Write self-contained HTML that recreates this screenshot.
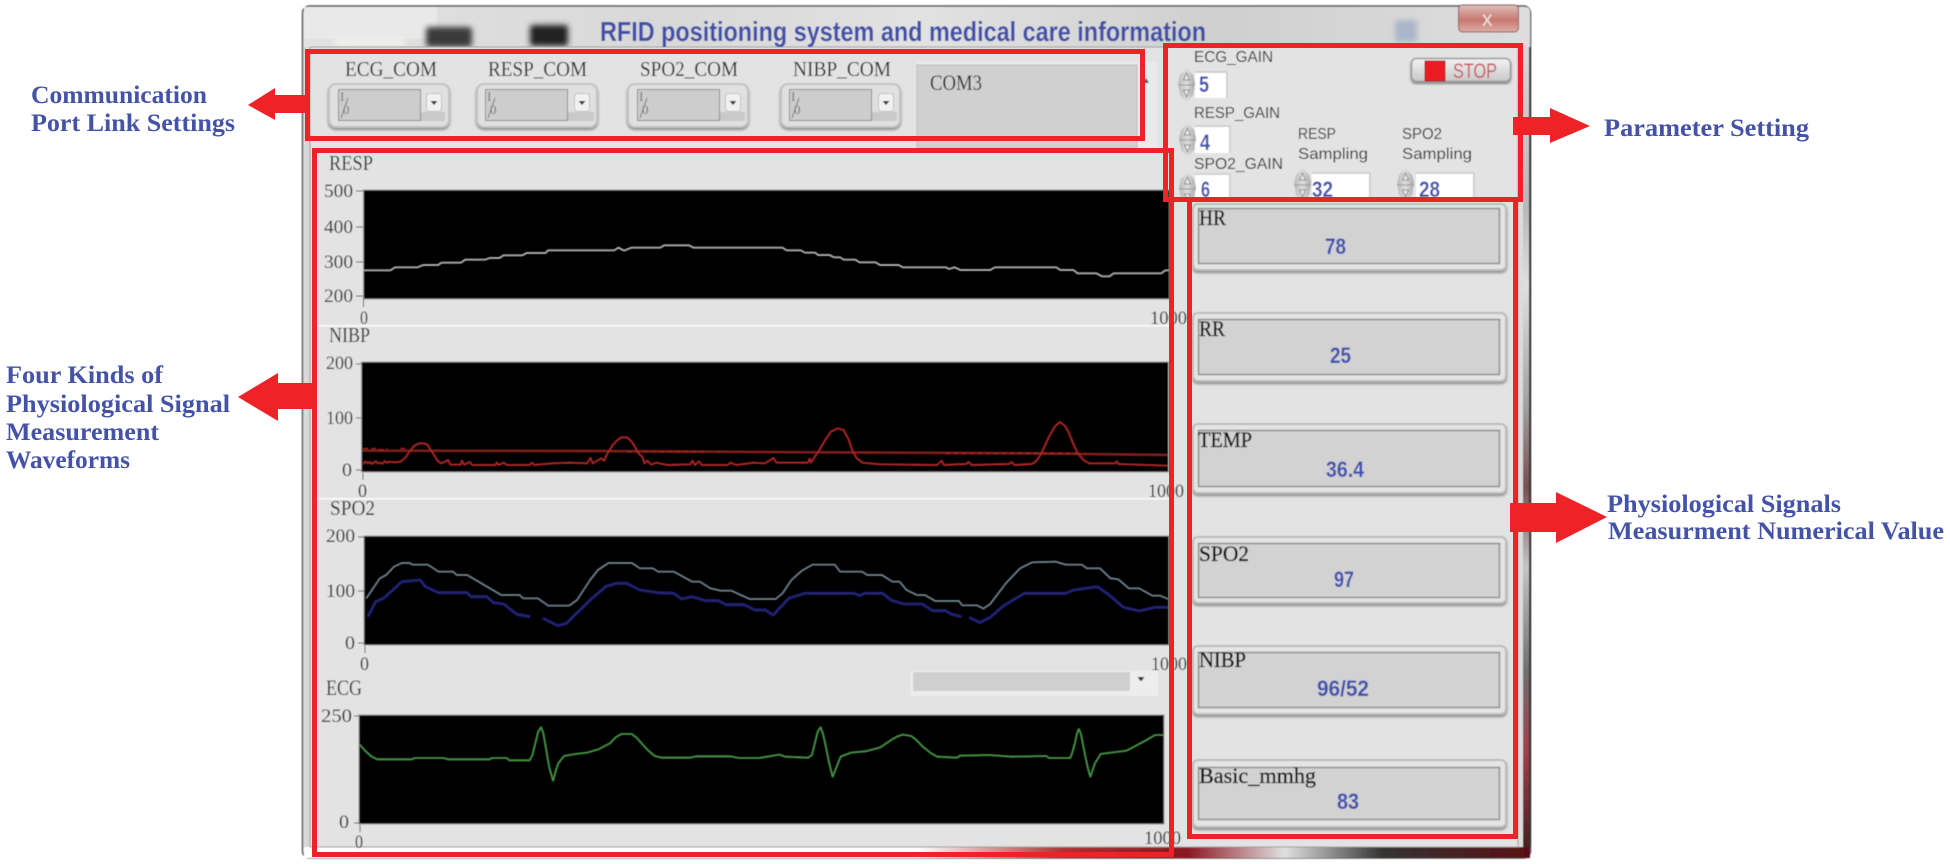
<!DOCTYPE html>
<html><head><meta charset="utf-8"><title>RFID positioning system</title>
<style>html,body{margin:0;padding:0;background:#fff;width:1950px;height:864px;overflow:hidden}svg{display:block}
.s{font-family:"Liberation Serif",serif;fill:#2b2b2b}
.a{font-family:"Liberation Sans",sans-serif;fill:#333}
.n{font-family:"Liberation Sans",sans-serif;font-weight:bold;fill:#4351ae}
.l{font-family:"Liberation Serif",serif;font-weight:bold;fill:#4453a8;font-size:25px}
.k{font-family:"Liberation Serif",serif;fill:#111;stroke:#111;stroke-width:.35}
polyline,path.c{fill:none;vector-effect:non-scaling-stroke;stroke-linejoin:round}
</style></head><body>
<svg xmlns="http://www.w3.org/2000/svg" width="1950" height="864" viewBox="0 0 1950 864">
<defs>
<linearGradient id="tb" x1="0" y1="0" x2="1" y2="0"><stop offset="0" stop-color="#e2e2e2"/><stop offset=".3" stop-color="#d8d8d8"/><stop offset=".5" stop-color="#e2e2e2"/><stop offset=".75" stop-color="#cfcfcf"/><stop offset="1" stop-color="#dedede"/></linearGradient>
<linearGradient id="cl" x1="0" y1="0" x2="0" y2="1"><stop offset="0" stop-color="#dcc0ba"/><stop offset=".55" stop-color="#c9786f"/><stop offset="1" stop-color="#dcaea6"/></linearGradient>
<linearGradient id="rf" x1="0" y1="0" x2="0" y2="1"><stop offset="0" stop-color="#d8d8d8"/><stop offset=".2" stop-color="#b8b8b8"/><stop offset=".3" stop-color="#e0e0e0"/><stop offset=".45" stop-color="#a0a0a0"/><stop offset=".55" stop-color="#7a5050"/><stop offset=".65" stop-color="#c4c4c4"/><stop offset=".78" stop-color="#707070"/><stop offset=".88" stop-color="#a04048"/><stop offset="1" stop-color="#4a2020"/></linearGradient>
<linearGradient id="bf" x1="0" y1="0" x2="1" y2="0"><stop offset="0" stop-color="#fff"/><stop offset=".5" stop-color="#fff"/><stop offset=".62" stop-color="#b03030"/><stop offset=".72" stop-color="#8a1520"/><stop offset=".8" stop-color="#e0e0e0"/><stop offset=".88" stop-color="#333"/><stop offset="1" stop-color="#5a1015"/></linearGradient>
<linearGradient id="bt" x1="0" y1="0" x2="0" y2="1"><stop offset="0" stop-color="#f2f2f2"/><stop offset="1" stop-color="#c8c8c8"/></linearGradient>
<linearGradient id="sp" x1="0" y1="0" x2="1" y2="0"><stop offset="0" stop-color="#b8b8b8"/><stop offset=".5" stop-color="#dedede"/><stop offset="1" stop-color="#a8a8a8"/></linearGradient>
<filter id="b6" x="-30%" y="-30%" width="160%" height="160%"><feGaussianBlur stdDeviation="3"/></filter>
<filter id="b1" x="-5%" y="-5%" width="110%" height="110%"><feGaussianBlur stdDeviation=".45"/></filter>
<filter id="sh" x="-5%" y="-10%" width="110%" height="125%"><feDropShadow dx="0" dy="2" stdDeviation="1.200" flood-color="#8a8a8a"/></filter>
<clipPath id="p3"><rect x="1163" y="43" width="360" height="157"/></clipPath>
<g id="dd"><rect x=".5" y=".5" width="15" height="18" rx="3" fill="#f1f1f1" stroke="#c4c4c4"/><path d="M4.500 8h7l-3.500 4z" fill="#333"/></g>
<g id="spin"><path d="M8.500 0L15 7 17 15 15 27 8.500 34 2 27 0 15 2 7z" fill="url(#sp)"/><path d="M0 17H17" stroke="#999"/><path d="M8.500 5l3 7h-6zM5.500 22h6l-3 7z" fill="#e8e8e8" stroke="#777" stroke-width=".8"/></g>
</defs>

<!-- window frame -->
<g filter="url(#b1)">
<rect x="302.500" y="6" width="1228" height="852" rx="7" fill="#e3e3e3" stroke="#555" stroke-width="1.500"/>
<path d="M304 12q0-5 5-5H1525q5 0 5 5V47H304z" fill="url(#tb)"/>
<rect x="304" y="7" width="133" height="32" fill="#e9e9e9"/>
<rect x="426" y="27" width="46" height="20" rx="3" fill="#3a3a3a" filter="url(#b6)"/>
<rect x="530" y="25" width="38" height="21" rx="3" fill="#222" filter="url(#b6)"/>
<rect x="1395" y="20" width="22" height="22" fill="#a9b5c8" filter="url(#b6)"/>
<rect x="335" y="39" width="70" height="7" fill="#f3f3ee" filter="url(#b6)"/>
<rect x="1518" y="47" width="12.500" height="800" fill="url(#rf)"/>
<rect x="1518" y="47" width="5" height="800" fill="#dcdcdc"/>
<rect x="1529" y="47" width="2" height="800" fill="#333"/>
<rect x="304" y="847" width="1226" height="11" fill="url(#bf)"/>
<rect x="304" y="47" width="8" height="800" fill="#d8d8d8"/>
<rect x="310" y="47" width="1208" height="800" fill="#e3e3e3" stroke="#9a9a9a" stroke-width="1"/>

<text class="a" x="600" y="41" font-size="28" font-weight="bold" style="fill:#3f4fa8" textLength="606" lengthAdjust="spacingAndGlyphs">RFID positioning system and medical care information</text>

<rect x="1458.500" y="5" width="60" height="27" rx="4" fill="url(#cl)" stroke="#8a5a54"/>
<text class="a" x="1482" y="26" font-size="21" style="fill:#efe0dc">x</text>

<!-- COM section -->
<g fill="#e0e0e0" stroke="#c2c2c2" stroke-width="2" filter="url(#sh)">
<rect x="329" y="84" width="120" height="43" rx="7"/>
<rect x="477" y="84" width="120" height="43" rx="7"/>
<rect x="628" y="84" width="120" height="43" rx="7"/>
<rect x="781" y="84" width="119" height="43" rx="7"/>
</g>
<g fill="#c9c9c9"><rect x="421" y="112" width="24" height="9"/><rect x="568" y="112" width="26" height="9"/><rect x="719" y="112" width="26" height="9"/><rect x="871" y="112" width="26" height="9"/></g>
<g fill="#cdcdcd" stroke="#8a8a8a">
<rect x="338.500" y="89.500" width="82" height="31"/>
<rect x="485.500" y="89.500" width="82" height="31"/>
<rect x="637.500" y="89.500" width="82" height="31"/>
<rect x="789.500" y="89.500" width="82" height="31"/>
</g>
<use href="#dd" transform="translate(426,93)"/>
<use href="#dd" transform="translate(574,93)"/>
<use href="#dd" transform="translate(725,93)"/>
<use href="#dd" transform="translate(878,93)"/>
<g class="s" font-size="21">
<text x="345" y="76" textLength="92" lengthAdjust="spacingAndGlyphs">ECG_COM</text>
<text x="488" y="76" textLength="99" lengthAdjust="spacingAndGlyphs">RESP_COM</text>
<text x="640" y="76" textLength="98" lengthAdjust="spacingAndGlyphs">SPO2_COM</text>
<text x="793" y="76" textLength="98" lengthAdjust="spacingAndGlyphs">NIBP_COM</text>
</g>
<g class="s" font-size="13" style="fill:#777">
<text x="340" y="101">I</text><text x="343" y="114">0</text><path d="M348 98l-7 20" stroke="#777" fill="none"/>
<text x="487" y="101">I</text><text x="490" y="114">0</text><path d="M495 98l-7 20" stroke="#777" fill="none"/>
<text x="639" y="101">I</text><text x="642" y="114">0</text><path d="M647 98l-7 20" stroke="#777" fill="none"/>
<text x="791" y="101">I</text><text x="794" y="114">0</text><path d="M799 98l-7 20" stroke="#777" fill="none"/>
</g>
<rect x="917" y="62" width="240" height="86" fill="#eaeaea"/>
<rect x="917" y="65" width="220" height="83" fill="#d0d0d0" stroke="#bcbcbc"/>
<text class="s" x="930" y="90" font-size="22" textLength="52" lengthAdjust="spacingAndGlyphs">COM3</text>
<path d="M1146 78l3 5h-6z" fill="#555"/>

<!-- plots -->
<rect x="317" y="325" width="852" height="1.500" fill="#fbfbfb"/>
<rect x="317" y="498" width="852" height="1.500" fill="#fbfbfb"/>
<rect x="363.500" y="190" width="806" height="109" fill="#000" stroke="#8a8a8a"/>
<rect x="361.500" y="362" width="807" height="110" fill="#000" stroke="#8a8a8a"/>
<rect x="364" y="536" width="805" height="109" fill="#000" stroke="#8a8a8a"/>
<rect x="359" y="715" width="805" height="109" fill="#000" stroke="#8a8a8a"/>

<g class="s" font-size="19">
<text x="329" y="170" font-size="21" textLength="44" lengthAdjust="spacingAndGlyphs">RESP</text>
<text x="324" y="197" textLength="29" lengthAdjust="spacingAndGlyphs">500</text>
<text x="324" y="233" textLength="29" lengthAdjust="spacingAndGlyphs">400</text>
<text x="324" y="268" textLength="29" lengthAdjust="spacingAndGlyphs">300</text>
<text x="324" y="302" textLength="29" lengthAdjust="spacingAndGlyphs">200</text>
<text x="360" y="324" textLength="8" lengthAdjust="spacingAndGlyphs">0</text>
<text x="1150" y="324" textLength="37" lengthAdjust="spacingAndGlyphs">1000</text>
<text x="329" y="342" font-size="21" textLength="41" lengthAdjust="spacingAndGlyphs">NIBP</text>
<text x="326" y="369" textLength="27" lengthAdjust="spacingAndGlyphs">200</text>
<text x="326" y="424" textLength="27" lengthAdjust="spacingAndGlyphs">100</text>
<text x="342" y="476" textLength="10" lengthAdjust="spacingAndGlyphs">0</text>
<text x="358" y="497" textLength="9" lengthAdjust="spacingAndGlyphs">0</text>
<text x="1148" y="497" textLength="36" lengthAdjust="spacingAndGlyphs">1000</text>
<text x="330" y="515" font-size="21" textLength="45" lengthAdjust="spacingAndGlyphs">SPO2</text>
<text x="326" y="542" textLength="29" lengthAdjust="spacingAndGlyphs">200</text>
<text x="326" y="597" textLength="29" lengthAdjust="spacingAndGlyphs">100</text>
<text x="345" y="649" textLength="10" lengthAdjust="spacingAndGlyphs">0</text>
<text x="360" y="670" textLength="9" lengthAdjust="spacingAndGlyphs">0</text>
<text x="1151" y="670" textLength="36" lengthAdjust="spacingAndGlyphs">1000</text>
<text x="326" y="695" font-size="22" textLength="36" lengthAdjust="spacingAndGlyphs">ECG</text>
<text x="321" y="722" textLength="31" lengthAdjust="spacingAndGlyphs">250</text>
<text x="339" y="828" textLength="10" lengthAdjust="spacingAndGlyphs">0</text>
<text x="355" y="848" textLength="8" lengthAdjust="spacingAndGlyphs">0</text>
<text x="1144" y="844" textLength="37" lengthAdjust="spacingAndGlyphs">1000</text>
</g>
<path d="M356 191h7M356 227h7M356 262h7M356 296h7M356 364h5M356 418h5M356 470h5M358 537h6M358 591h6M358 643h6M354 716h5M354 823h5M363.500 299v8M363 473v7M365 646v7M360 825v7" stroke="#555" fill="none"/>

<rect x="911" y="671" width="247" height="25" fill="#ededed"/>
<rect x="913" y="672" width="217" height="19" fill="#cfcfcf"/>
<path d="M1137.500 677h7l-3.500 4.500z" fill="#333"/>

<!-- curves: RESP -->
<g transform="translate(290,0) scale(.57398,.33333)">
<polyline stroke="#c4c4c4" stroke-width="1.100" points="128,811 175,811 183,802 222,802 232,795 258,795 264,788 298,788 305,779 340,779 348,774 365,774 372,766 405,766 412,759 445,759 450,751 565,751 572,743 582,752 595,743 645,743 652,736 695,736 703,743 858,743 865,751 890,751 897,758 915,758 920,765 940,765 948,772 958,772 965,779 985,779 992,787 1020,787 1028,795 1060,795 1068,802 1143,802 1148,807 1158,802 1168,810 1220,810 1228,802 1335,802 1342,810 1365,810 1372,820 1405,820 1415,829 1428,829 1435,820 1518,820 1525,811 1535,811"/>
</g>
<!-- NIBP -->
<g transform="translate(300,300) scale(.57398,.33333)">
<polyline stroke="#84201f" stroke-width="2" points="108,452 500,453 800,456 1280,460 1512,465"/>
<polyline stroke="#b02a2c" stroke-width="1.400" points="110,492 114,484 118,490 122,486 125,492 132,484 136,490 140,488 144,491 148,483 152,489 155,485 165,487 175,485 180,478 185,470 190,456 195,445 200,436 208,430 216,430 222,434 227,448 232,460 238,478 245,490 252,486 258,480 262,494 270,494 280,494 282,482 286,494 296,486 300,495 340,495 343,488 346,495 355,488 360,495 400,495 404,488 408,495 440,490 470,488 500,490 506,474 510,490 525,475 530,482 535,462 545,435 552,422 560,412 570,412 578,425 585,445 590,460 597,472 600,490 605,482 612,494 620,488 640,495 680,493 684,482 688,495 695,484 700,495 745,495 750,488 760,495 790,488 810,490 825,474 830,488 885,488 888,476 890,488 897,470 905,450 915,420 925,395 937,385 947,390 955,415 962,450 970,475 980,488 1010,493 1110,495 1118,482 1122,495 1160,492 1165,486 1170,495 1235,492 1240,486 1245,495 1275,492 1283,483 1290,465 1297,440 1305,410 1315,380 1324,366 1333,378 1340,400 1348,435 1355,460 1365,480 1375,490 1420,490 1423,484 1426,492 1440,493 1512,497"/>
<path class="c" stroke="#b02a2c" stroke-width="1.200" stroke-dasharray="5 3" d="M110 446h25l6 4h8l3-4M175 446h10M570 455h135M730 455h2M1125 460h235"/>
</g>
<!-- SPO2 -->
<g transform="translate(360,530) scale(.52296,.33333)">
<polyline stroke="#7a8e9b" stroke-width="1.100" points="12,205 25,175 38,145 50,135 65,110 80,99 95,99 100,104 130,104 150,125 178,125 185,135 205,135 270,195 305,195 312,205 340,205 360,227 400,227 415,210 440,150 455,120 475,99 520,99 535,115 560,115 570,125 600,125 635,155 650,155 670,175 690,182 710,182 745,207 795,207 808,190 825,150 845,122 865,104 908,104 918,125 960,125 970,135 998,135 1018,155 1032,155 1045,180 1065,195 1080,195 1100,213 1145,213 1152,226 1180,226 1192,236 1205,222 1235,160 1262,115 1285,97 1330,95 1350,104 1380,104 1390,115 1415,115 1435,145 1450,148 1470,175 1490,175 1515,197 1530,197 1545,207"/>
<path class="c" stroke="#23236f" stroke-width="2.600" d="M15 260L30 215 45 205 80 155 115 150 125 170 150 188 205 188 212 200 243 200 255 218 275 222 300 253 325 260M350 265L378 287 395 280 440 210 470 170 490 160 510 160 535 180 570 188 600 190 615 207 635 200 660 212 685 212 700 224 735 224 755 240 775 240 790 255 820 205 850 190 945 190 955 197 965 190 1000 190 1015 210 1040 222 1075 222 1095 242 1120 242 1130 252 1150 260M1165 262L1185 278 1205 262 1230 228 1270 190 1350 190 1365 180 1410 170 1430 192 1460 232 1490 243 1520 232 1545 232"/>
</g>
<!-- ECG -->
<g transform="translate(300,580) scale(.57398,.33333)">
<polyline stroke="#4c9a4c" stroke-width="1.300" points="103,492 115,515 125,530 135,538 195,538 200,534 250,534 258,538 330,538 335,534 360,534 365,541 400,541 405,525 410,490 415,455 420,442 424,460 428,500 434,560 441,602 446,570 450,550 460,528 480,522 500,518 520,508 540,490 550,472 560,462 578,462 587,474 595,490 607,512 618,528 630,533 680,533 690,529 750,529 765,534 800,534 835,524 845,530 885,533 892,525 897,490 902,455 907,442 911,460 915,490 922,550 928,590 935,560 942,530 960,518 985,514 1010,503 1030,480 1040,470 1050,464 1065,468 1075,482 1085,500 1098,518 1110,530 1145,533 1150,527 1200,525 1240,530 1300,528 1305,534 1342,534 1346,515 1350,490 1354,458 1357,447 1361,465 1366,510 1372,560 1377,590 1385,550 1395,522 1440,512 1475,480 1490,465 1505,465"/>
</g>

<!-- parameter panel -->
<g clip-path="url(#p3)">
<g fill="#fff">
<rect x="1195" y="72" width="32" height="26"/>
<rect x="1195" y="126" width="35" height="27"/>
<rect x="1195" y="174" width="35" height="30"/>
<rect x="1312" y="173" width="58" height="30"/>
<rect x="1416" y="173" width="58" height="30"/>
</g>
<path d="M1195 72h32M1195 126h35M1195 174h35M1312 173h58M1416 173h58M1227 72v26M1230 126v27M1230 174v30M1370 173v30M1474 173v30" stroke="#d0d0d0" stroke-width="2" fill="none"/>
<use href="#spin" transform="translate(1178,68)"/>
<use href="#spin" transform="translate(1179,123)"/>
<use href="#spin" transform="translate(1179,172)"/>
<use href="#spin" transform="translate(1294,168)"/>
<use href="#spin" transform="translate(1397,168)"/>
<g class="n" font-size="22">
<text x="1199" y="92" textLength="10" lengthAdjust="spacingAndGlyphs">5</text>
<text x="1200" y="150" textLength="10" lengthAdjust="spacingAndGlyphs">4</text>
<text x="1201" y="197" textLength="9" lengthAdjust="spacingAndGlyphs">6</text>
<text x="1312" y="197" textLength="21" lengthAdjust="spacingAndGlyphs">32</text>
<text x="1419" y="197" textLength="21" lengthAdjust="spacingAndGlyphs">28</text>
</g>
</g>
<g class="a" font-size="16">
<text x="1194" y="62" textLength="79" lengthAdjust="spacingAndGlyphs">ECG_GAIN</text>
<text x="1194" y="118" textLength="86" lengthAdjust="spacingAndGlyphs">RESP_GAIN</text>
<text x="1194" y="169" textLength="89" lengthAdjust="spacingAndGlyphs">SPO2_GAIN</text>
<text x="1298" y="139" textLength="38" lengthAdjust="spacingAndGlyphs">RESP</text>
<text x="1298" y="159" textLength="70" lengthAdjust="spacingAndGlyphs">Sampling</text>
<text x="1402" y="139" textLength="40" lengthAdjust="spacingAndGlyphs">SPO2</text>
<text x="1402" y="159" textLength="70" lengthAdjust="spacingAndGlyphs">Sampling</text>
</g>
<rect x="1411.500" y="58.500" width="99" height="23" rx="5" fill="url(#bt)" stroke="#9a9a9a" stroke-width="1.500" filter="url(#sh)"/>
<rect x="1425" y="61" width="20" height="20" fill="#ea1c24" stroke="#a01820"/>
<text class="a" x="1453" y="78" font-size="21" style="fill:#c9555a" textLength="44" lengthAdjust="spacingAndGlyphs">STOP</text>

<!-- value boxes -->
<g fill="#e4e4e4" stroke="#bcbcbc" stroke-width="2" filter="url(#sh)">
<rect x="1193" y="204" width="313" height="66" rx="5"/>
<rect x="1193" y="313" width="313" height="68" rx="5"/>
<rect x="1193" y="424" width="313" height="69" rx="5"/>
<rect x="1193" y="537" width="313" height="66" rx="5"/>
<rect x="1193" y="646" width="313" height="68" rx="5"/>
<rect x="1193" y="760" width="313" height="67" rx="5"/>
</g>
<g fill="#d2d2d2" stroke="#8f8f8f" stroke-width="1.500">
<rect x="1198.500" y="208.500" width="301" height="55"/>
<rect x="1198.500" y="319.500" width="301" height="55"/>
<rect x="1198.500" y="430.500" width="301" height="56"/>
<rect x="1198.500" y="543.500" width="301" height="54"/>
<rect x="1198.500" y="652.500" width="301" height="55"/>
<rect x="1198.500" y="767.500" width="301" height="52"/>
</g>
<g class="k" font-size="22">
<text x="1199" y="225" textLength="27" lengthAdjust="spacingAndGlyphs">HR</text>
<text x="1199" y="336" textLength="26" lengthAdjust="spacingAndGlyphs">RR</text>
<text x="1198" y="447" textLength="54" lengthAdjust="spacingAndGlyphs">TEMP</text>
<text x="1199" y="561" textLength="50" lengthAdjust="spacingAndGlyphs">SPO2</text>
<text x="1199" y="667" textLength="47" lengthAdjust="spacingAndGlyphs">NIBP</text>
<text x="1199" y="783" textLength="117" lengthAdjust="spacingAndGlyphs">Basic_mmhg</text>
</g>
<g class="n" font-size="22">
<text x="1325" y="254" textLength="21" lengthAdjust="spacingAndGlyphs">78</text>
<text x="1330" y="363" textLength="21" lengthAdjust="spacingAndGlyphs">25</text>
<text x="1326" y="477" textLength="38" lengthAdjust="spacingAndGlyphs">36.4</text>
<text x="1334" y="587" textLength="20" lengthAdjust="spacingAndGlyphs">97</text>
<text x="1317" y="696" textLength="52" lengthAdjust="spacingAndGlyphs">96/52</text>
<text x="1337" y="809" textLength="22" lengthAdjust="spacingAndGlyphs">83</text>
</g>
</g>

<!-- red highlight boxes -->
<g fill="none" stroke="#ee2227" stroke-width="5">
<rect x="307.500" y="51.500" width="835" height="87"/>
<rect x="314.500" y="150.500" width="857" height="704"/>
<rect x="1165.500" y="45.500" width="355" height="154"/>
<path d="M1189.500 200V836.500H1515.500V200"/>
</g>
<!-- arrows -->
<g fill="#ee2227">
<path d="M248 105L275 88V95H305V113H275V120Z"/>
<path d="M238 397L278 373V383H312V409H278V421Z"/>
<path d="M1513 117H1550V108L1590 126 1550 143V135H1513Z"/>
<path d="M1510 503H1556V492L1607 517 1556 543V532H1510Z"/>
</g>
<!-- annotations -->
<text class="l" x="31" y="103" textLength="176" lengthAdjust="spacingAndGlyphs">Communication</text>
<text class="l" x="31" y="131" textLength="204" lengthAdjust="spacingAndGlyphs">Port Link Settings</text>
<text class="l" x="6" y="383" textLength="157" lengthAdjust="spacingAndGlyphs">Four Kinds of</text>
<text class="l" x="6" y="412" textLength="224" lengthAdjust="spacingAndGlyphs">Physiological Signal</text>
<text class="l" x="6" y="440" textLength="153" lengthAdjust="spacingAndGlyphs">Measurement</text>
<text class="l" x="6" y="468" textLength="124" lengthAdjust="spacingAndGlyphs">Waveforms</text>
<text class="l" x="1604" y="136" textLength="205" lengthAdjust="spacingAndGlyphs">Parameter Setting</text>
<text class="l" x="1607" y="512" textLength="234" lengthAdjust="spacingAndGlyphs">Physiological Signals</text>
<text class="l" x="1608" y="539" textLength="336" lengthAdjust="spacingAndGlyphs">Measurment Numerical Value</text>
</svg>
</body></html>
